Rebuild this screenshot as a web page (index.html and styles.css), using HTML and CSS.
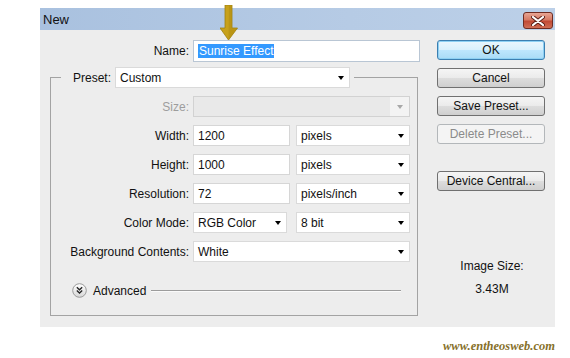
FILE: index.html
```html
<!DOCTYPE html>
<html>
<head>
<meta charset="utf-8">
<link rel="stylesheet" href="styles.css">
</head>
<body>
<div class="page">
  <div class="dialog">
    <div class="titlebar">
      <span class="title">New</span>
      <span class="close">
        <svg width="14" height="10" viewBox="0 0 14 10"><path d="M2 1 L12 9 M12 1 L2 9" stroke="#5a1f17" stroke-width="4" stroke-linecap="round"/><path d="M2 1 L12 9 M12 1 L2 9" stroke="#ffffff" stroke-width="2.2" stroke-linecap="round"/></svg>
      </span>
    </div>
    <svg class="pointer" width="18" height="36" viewBox="0 0 18 36">
      <path d="M5 0 H12 V23 H17.5 L8.5 35 L0 23 H5 Z" fill="#c7a11b" stroke="#9f800f" stroke-width="0.8"/>
      <path d="M9 0 H12 V23 H17.5 L8.5 35 Z" fill="#b08d12" opacity="0.6"/>
    </svg>
    <div class="content">
      <div class="main">
        <div class="name-row">
          <span class="lbl name-lbl">Name:</span>
          <div class="field name-field"><span class="sel">Sunrise Effect</span></div>
        </div>
        <fieldset class="group">
          <legend class="legend">
            <span class="legend-lbl">Preset:</span>
            <div class="select preset"><span>Custom</span><i class="caret"></i></div>
          </legend>
          <div class="frow first">
            <span class="lbl dim">Size:</span>
            <div class="select disabled w-full"><span class="dis-arrow"><i class="caret grey"></i></span></div>
          </div>
          <div class="frow">
            <span class="lbl">Width:</span>
            <div class="field w-num">1200</div>
            <div class="select w-unit"><span>pixels</span><i class="caret"></i></div>
          </div>
          <div class="frow">
            <span class="lbl">Height:</span>
            <div class="field w-num">1000</div>
            <div class="select w-unit"><span>pixels</span><i class="caret"></i></div>
          </div>
          <div class="frow">
            <span class="lbl">Resolution:</span>
            <div class="field w-num">72</div>
            <div class="select w-unit"><span>pixels/inch</span><i class="caret"></i></div>
          </div>
          <div class="frow">
            <span class="lbl">Color Mode:</span>
            <div class="select w-mode"><span>RGB Color</span><i class="caret"></i></div>
            <div class="select w-bit"><span>8 bit</span><i class="caret"></i></div>
          </div>
          <div class="frow">
            <span class="lbl">Background Contents:</span>
            <div class="select w-full"><span>White</span><i class="caret"></i></div>
          </div>
          <div class="advanced">
            <svg class="adv-icon" width="15" height="15" viewBox="0 0 15 15">
              <defs><linearGradient id="ag" x1="0" y1="0" x2="0" y2="1"><stop offset="0" stop-color="#ffffff"/><stop offset="1" stop-color="#d6d6d6"/></linearGradient></defs>
              <circle cx="7.5" cy="7.5" r="6.8" fill="url(#ag)" stroke="#9a9a9a" stroke-width="1"/>
              <path d="M4.8 4.3 L7.5 6.8 L10.2 4.3 M4.8 7.6 L7.5 10.1 L10.2 7.6" fill="none" stroke="#222" stroke-width="1.3"/>
            </svg>
            <span class="adv-text">Advanced</span>
            <span class="adv-line"></span>
          </div>
        </fieldset>
      </div>
      <div class="side">
        <div class="btn primary">OK</div>
        <div class="btn">Cancel</div>
        <div class="btn">Save Preset...</div>
        <div class="btn off">Delete Preset...</div>
        <div class="btn device">Device Central...</div>
        <div class="info">
          <div>Image Size:</div>
          <div>3.43M</div>
        </div>
      </div>
    </div>
  </div>
  <div class="watermark">www.entheosweb.com</div>
</div>
</body>
</html>
```

FILE: styles.css
```css
* { box-sizing: border-box; }
body {
  margin: 0;
  background: #ffffff;
  font-family: "Liberation Sans", Arial, sans-serif;
  font-size: 12px;
  color: #111;
}
.page {
  padding: 8px 0 0 40px;
  width: 560px;
}
.dialog {
  position: relative;
  width: 515px;
  height: 319px;
  background: #ededed;
}
.titlebar {
  height: 22px;
  display: flex;
  align-items: center;
  justify-content: space-between;
  padding: 0 2px 0 3px;
  background: linear-gradient(90deg, #a9c1df 0%, #b6cbe5 60%, #bcd0e8 100%);
}
.title {
  font-size: 13px;
  color: #111;
}
.close {
  width: 30px;
  height: 17px;
  margin-top: 3px;
  border: 1px solid #6f2c22;
  border-radius: 3px;
  background: linear-gradient(#e7a594 0%, #d67a64 45%, #c24a35 55%, #cf6d55 100%);
  display: flex;
  align-items: center;
  justify-content: center;
}
.pointer {
  position: absolute;
  left: 180px;
  top: -3px;
}
.content {
  display: flex;
  padding: 10px 0 0 0;
  gap: 17px;
}
.main {
  width: 380px;
}
.name-row {
  display: flex;
  align-items: center;
  gap: 4px;
  height: 22px;
}
.lbl {
  text-align: right;
  white-space: nowrap;
}
.name-lbl { width: 149px; }
.field {
  height: 22px;
  background: #fff;
  border: 1px solid #d6d6d6;
  padding-left: 4px;
  display: flex;
  align-items: center;
}
.name-field {
  width: 227px;
  border-color: #b9c6d4;
}
.sel {
  background: #3399ff;
  color: #fff;
  padding: 0 1px;
  line-height: 14px;
}
.group {
  margin: 5px 0 0 10px;
  padding: 0 0 17px 0;
  border: 1px solid #a3a3a3;
  width: 368px;
  min-width: 0;
}
.legend {
  margin-left: 10px;
  padding: 0 4px 0 12px;
  display: flex;
  align-items: center;
  gap: 4px;
}
.select {
  height: 21px;
  background: #fff;
  border: 1px solid #dadada;
  display: flex;
  align-items: center;
  justify-content: space-between;
  padding: 0 5px 0 4px;
}
.preset { width: 235px; }
.caret {
  width: 0;
  height: 0;
  border-left: 3.5px solid transparent;
  border-right: 3.5px solid transparent;
  border-top: 4px solid #000;
}
.caret.grey { border-top-color: #a8a8a8; }
.frow {
  display: flex;
  align-items: center;
  height: 21px;
  margin-top: 8px;
}
.frow.first { margin-top: 8px; }
.frow .lbl {
  width: 138px;
  margin-right: 4px;
}
.dim { color: #9d9d9d; }
.w-full { width: 217px; }
.w-num { width: 97px; height: 21px; }
.w-unit { width: 114px; margin-left: 6px; }
.w-mode { width: 94px; }
.w-bit { width: 114px; margin-left: 9px; }
.disabled {
  background: #e9e9e9;
  border-color: #d2d2d2;
  padding: 0;
  justify-content: flex-end;
}
.dis-arrow {
  width: 19px;
  height: 19px;
  background: #f3f3f3;
  display: flex;
  align-items: center;
  justify-content: center;
}
.advanced {
  display: flex;
  align-items: center;
  height: 15px;
  margin-top: 21px;
  padding: 0 16px 0 21px;
}
.adv-icon { flex: none; }
.adv-text { margin-left: 6px; }
.adv-line {
  flex: 1;
  height: 1px;
  background: #9c9c9c;
  margin-left: 5px;
  box-shadow: 0 1px 0 #fafafa;
}
.side {
  width: 108px;
  display: flex;
  flex-direction: column;
  gap: 8px;
}
.btn {
  height: 20px;
  border: 1px solid #707070;
  border-radius: 3px;
  background: linear-gradient(#f5f5f5 0%, #ebebeb 48%, #dddddd 52%, #cfcfcf 100%);
  display: flex;
  align-items: center;
  justify-content: center;
}
.btn.primary {
  border-color: #3c7fb1;
  background: linear-gradient(#eaf6fd 0%, #d9f0fc 48%, #bee6fd 52%, #a9dbf6 100%);
  box-shadow: inset 0 0 0 1px #8ed0f3;
}
.btn.off {
  border-color: #b3b7ba;
  background: #f4f4f4;
  color: #8b8b8b;
}
.btn.device { margin-top: 19px; }
.info {
  margin-top: 60px;
  text-align: center;
  line-height: 14px;
  display: flex;
  flex-direction: column;
  gap: 9px;
  padding-left: 2px;
}
.watermark {
  width: 515px;
  margin-top: 12px;
  text-align: right;
  font-family: "Liberation Serif", "DejaVu Serif", serif;
  font-weight: bold;
  font-style: italic;
  font-size: 12.5px;
  color: #86702a;
  line-height: 14px;
}
```
